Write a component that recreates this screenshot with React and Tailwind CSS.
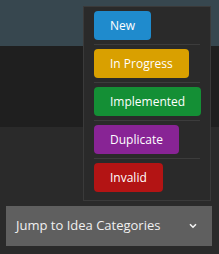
const STATUSES = [
  { label: 'New', cls: 'bg-[#1f8bcd]' },
  { label: 'In Progress', cls: 'bg-[#d9a000]' },
  { label: 'Implemented', cls: 'bg-[#148f35]' },
  { label: 'Duplicate', cls: 'bg-[#882495]' },
  { label: 'Invalid', cls: 'bg-[#b31414]' },
];

export default function App() {
  return (
    <div className="relative h-[254px] w-[219px] overflow-hidden bg-[#2a2a2a] font-['Open_Sans',sans-serif]">
      <div className="h-[46px] bg-[#37474f]" />
      <div className="h-[81px] bg-[#1f1f1f]" />

      <div className="px-[6px] pt-[79px]">
        <button
          type="button"
          className="flex h-[40px] w-[206px] items-center justify-between bg-[#5f5f5f] pl-[10px] pr-[15px] text-[13px] text-[#f0f0f0]"
        >
          <span>Jump to Idea Categories</span>
          <svg width="8" height="6" viewBox="0 0 8 6" fill="none">
            <path d="M1 1.2 L4 4.2 L7 1.2" stroke="#f4f4f4" strokeWidth="1.6" />
          </svg>
        </button>
      </div>

      <div className="absolute left-[83px] top-[6px] w-[128px] border border-[#3a3a3a] bg-[#2a2a2a] px-[10px] pb-[4px] pt-[4px]">
        {STATUSES.map((s, i) => (
          <div key={s.label} className={i > 0 ? 'border-t border-[#3c3c3c] pt-[4px]' : ''}>
            <div className="pb-[4px]">
              <span
                className={`inline-flex h-[29px] items-center rounded-[4px] px-[16px] text-[12px] text-white ${s.cls}`}
              >
                {s.label}
              </span>
            </div>
          </div>
        ))}
      </div>
    </div>
  );
}
